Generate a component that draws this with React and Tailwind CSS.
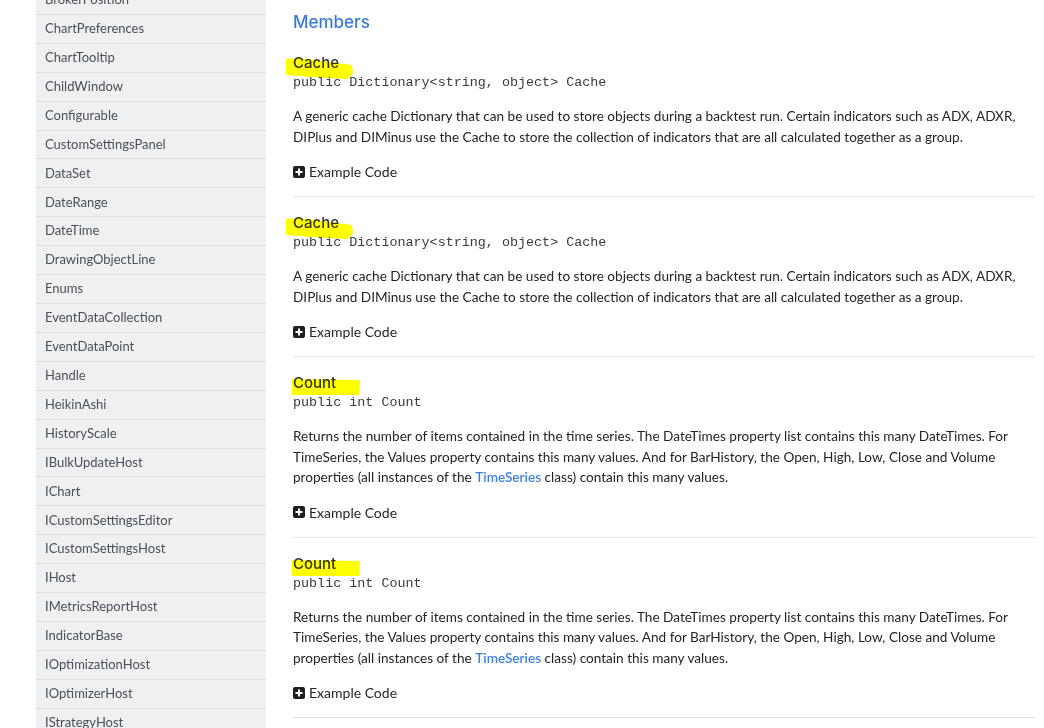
import React from "react";

const sideItems = [
  "BrokerPosition","ChartPreferences","ChartTooltip","ChildWindow","Configurable","CustomSettingsPanel","DataSet","DateRange","DateTime","DrawingObjectLine","Enums","EventDataCollection","EventDataPoint","Handle","HeikinAshi","HistoryScale","IBulkUpdateHost","IChart","ICustomSettingsEditor","ICustomSettingsHost","IHost","IMetricsReportHost","IndicatorBase","IOptimizationHost","IOptimizerHost","IStrategyHost",
];

function PlusSquare() {
  return (
    <svg width="12" height="12" viewBox="0 0 12 12" className="shrink-0">
      <rect x="0" y="0" width="12" height="12" rx="2" fill="#1f1f1f" />
      <rect x="2.5" y="5" width="7" height="2" fill="#fff" />
      <rect x="5" y="2.5" width="2" height="7" fill="#fff" />
    </svg>
  );
}

function Highlight({ kind }) {
  if (kind === "slant") {
    return (
      <svg className="absolute left-[-7px] top-0 mix-blend-multiply pointer-events-none" width="70" height="28" viewBox="0 0 70 28">
        <polygon points="0,6 14,5 66,12 67,20 62,26 40,25 0,22" fill="#ffff00" />
      </svg>
    );
  }
  return (
    <svg className="absolute left-[-1px] top-[6px] mix-blend-multiply pointer-events-none" width="68" height="17" viewBox="0 0 68 17">
      <polygon points="0,0 68,1 67,16 0,16" fill="#ffff00" />
    </svg>
  );
}

const bodyFont = { fontFamily: 'Lato, "Open Sans", sans-serif' };
const headFont = { fontFamily: 'Inter, "Noto Sans", sans-serif' };

function Member({ title, code, lines, kind }) {
  return (
    <div className="border-b border-[#e3e3e3] pt-[16px] pb-[14px]">
      <div className="relative h-[20px] leading-[20px] text-[15px] text-[#333] font-medium" style={headFont}>
        <span className="relative z-0">{title}</span>
        <Highlight kind={kind} />
      </div>
      <div className="h-[20px] leading-[20px] text-[13.4px] text-[#3a3a3a]" style={{ fontFamily: '"Liberation Mono", monospace' }}>
        {code}
      </div>
      <div className="mt-[13px] text-[13.6px] leading-[20.5px] text-[#212529]" style={bodyFont}>
        {lines.map((l, i) => (
          <div key={i} className="whitespace-nowrap">{l}</div>
        ))}
      </div>
      <div className="mt-[14px] flex items-center gap-[4px] h-[21px] text-[14px] text-[#212529]" style={bodyFont}>
        <PlusSquare />
        <span>Example Code</span>
      </div>
    </div>
  );
}

const cacheLines = [
  "A generic cache Dictionary that can be used to store objects during a backtest run. Certain indicators such as ADX, ADXR,",
  "DIPlus and DIMinus use the Cache to store the collection of indicators that are all calculated together as a group.",
];

const countLines = [
  "Returns the number of items contained in the time series. The DateTimes property list contains this many DateTimes. For",
  "TimeSeries, the Values property contains this many values. And for BarHistory, the Open, High, Low, Close and Volume",
  <>properties (all instances of the <span className="text-[#3f7fe6] font-semibold">TimeSeries</span> class) contain this many values.</>,
];

export default function App() {
  return (
    <div className="w-[1044px] h-[728px] overflow-hidden bg-white flex" style={bodyFont}>
      <div className="w-[36px] shrink-0" />
      <div className="w-[230px] shrink-0 bg-[#eff0f2] h-full overflow-hidden">
        <div className="-mt-[14px]">
          {sideItems.map((s) => (
            <div key={s} className="h-[28.92px] border-b border-[#dcdee1] flex items-center pl-[9px] text-[13px] text-[#495057]">
              {s}
            </div>
          ))}
        </div>
      </div>
      <div className="ml-[27px] w-[742px] shrink-0">
        <div className="pt-[10px] h-[34px] leading-[24px] text-[17px] text-[#3a7bd5] font-medium" style={headFont}>
          Members
        </div>
        <div className="mt-[3px]">
          <Member title="Cache" code="public Dictionary<string, object> Cache" lines={cacheLines} kind="slant" />
          <Member title="Cache" code="public Dictionary<string, object> Cache" lines={cacheLines} kind="slant" />
          <Member title="Count" code="public int Count" lines={countLines} kind="rect" />
          <Member title="Count" code="public int Count" lines={countLines} kind="rect" />
        </div>
      </div>
    </div>
  );
}
